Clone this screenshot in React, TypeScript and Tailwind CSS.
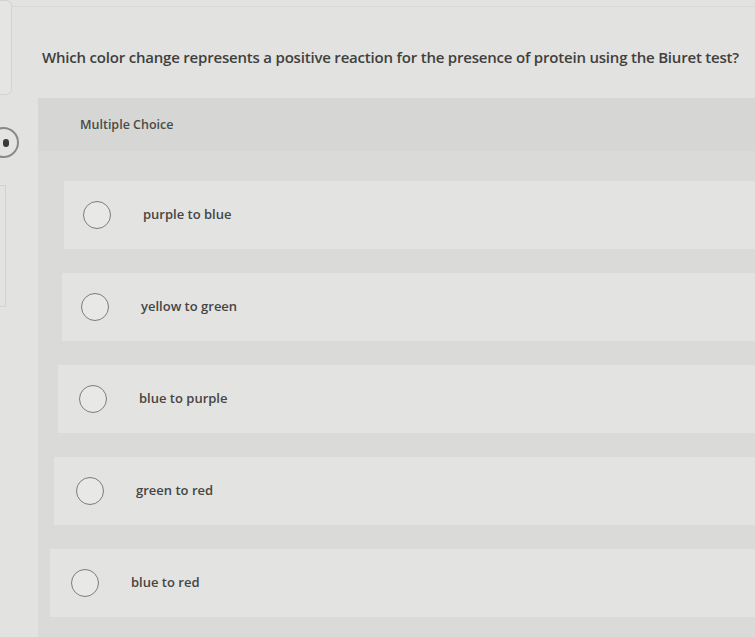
const options = [
  { label: 'purple to blue', row: 'ml-[26px] pl-[19px]' },
  { label: 'yellow to green', row: 'ml-[24px] pl-[19px]' },
  { label: 'blue to purple', row: 'ml-[20px] pl-[21px]' },
  { label: 'green to red', row: 'ml-[16px] pl-[22px]' },
  { label: 'blue to red', row: 'ml-[12px] pl-[21px]' },
];

function Radio() {
  return (
    <span className="block w-[28px] h-[28px] shrink-0 rounded-full border-[1.5px] border-[#7c7c7a] bg-[#e8e8e6]" />
  );
}

export default function App() {
  return (
    <div
      className="w-[755px] h-[637px] overflow-hidden bg-[#e2e2e0] flex text-[#444443]"
      style={{ fontFamily: '"Open Sans", "Liberation Sans", Arial, sans-serif' }}
    >
      {/* left sidebar, mostly off screen */}
      <div className="w-[12px] shrink-0 flex flex-col">
        <div className="h-[95px] -ml-[20px] w-[32px] rounded-r-md border border-[#d2d2d0] bg-[#e5e5e3]" />
        <div className="mt-[32px] -ml-[12px] w-[31px] h-[31px] rounded-full border-2 border-[#8a8a88] bg-[#e4e4e2] flex items-center justify-end pr-[8px]">
          <span className="w-[6px] h-[8px] rounded-full bg-[#3a3a3a]" />
        </div>
        <div className="mt-[27px] -ml-[20px] w-[26px] h-[122px] border border-[#d2d2d0] bg-[#e2e2e0]" />
      </div>

      <div className="flex-1 flex flex-col border-t border-[#d8d8d6] mt-[6px]">
        <div className="pl-[30px] pt-[40px] h-[91px]">
          <p className="text-[15px] leading-[20px] font-semibold tracking-[-0.2px] whitespace-nowrap text-[#3f3f3e]">
            Which color change represents a positive reaction for the presence of protein using the Biuret test?
          </p>
        </div>

        <div className="ml-[26px] flex-1 bg-[#dadad8] flex flex-col">
          <div className="h-[53px] bg-[#d6d6d4] flex items-center pl-[42px] pt-[2px]">
            <span className="text-[12.5px] font-semibold text-[#4a4a49]">Multiple Choice</span>
          </div>
          <div className="flex flex-col gap-[24px] pt-[30px]">
            {options.map((o) => (
              <div
                key={o.label}
                className={`${o.row} h-[68px] bg-[#e3e3e1] flex items-center gap-[32px]`}
              >
                <Radio />
                <span className="text-[13px] font-semibold text-[#454544]">{o.label}</span>
              </div>
            ))}
          </div>
        </div>
      </div>
    </div>
  );
}
